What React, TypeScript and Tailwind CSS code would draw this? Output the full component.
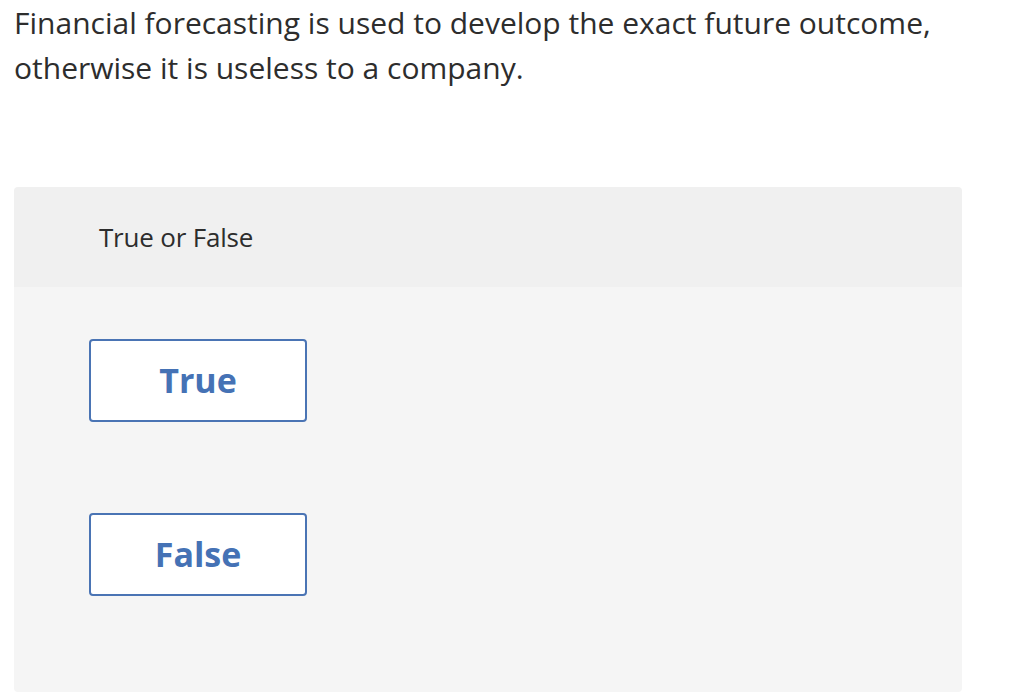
const App = () => {
  return (
    <div className="min-h-[694px] bg-white font-['Open_Sans',sans-serif] text-[#2d2d2d]">
      <p className="px-[14px] text-[30px] leading-[45px]">
        Financial forecasting is used to develop the exact future outcome,
        <br />
        otherwise it is useless to a company.
      </p>

      <div className="ml-[14px] mt-[97px] w-[948px] overflow-hidden rounded-[4px]">
        {/* question type */}
        <div className="flex h-[100px] items-center bg-[#f0f0f0] pl-[85px]">
          <span className="text-[26px] tracking-[-0.2px]">True or False</span>
        </div>

        {/* answer choices */}
        <div className="flex h-[405px] flex-col gap-[91px] bg-[#f5f5f5] pl-[75px] pt-[52px]">
          <button className="flex h-[83px] w-[218px] items-center justify-center rounded-[4px] border-2 border-[#4a74b4] bg-white text-[34px] font-bold text-[#4572b5]">
            True
          </button>
          <button className="flex h-[83px] w-[218px] items-center justify-center rounded-[4px] border-2 border-[#4a74b4] bg-white text-[34px] font-bold text-[#4572b5]">
            False
          </button>
        </div>
      </div>
    </div>
  );
};

export default App;
